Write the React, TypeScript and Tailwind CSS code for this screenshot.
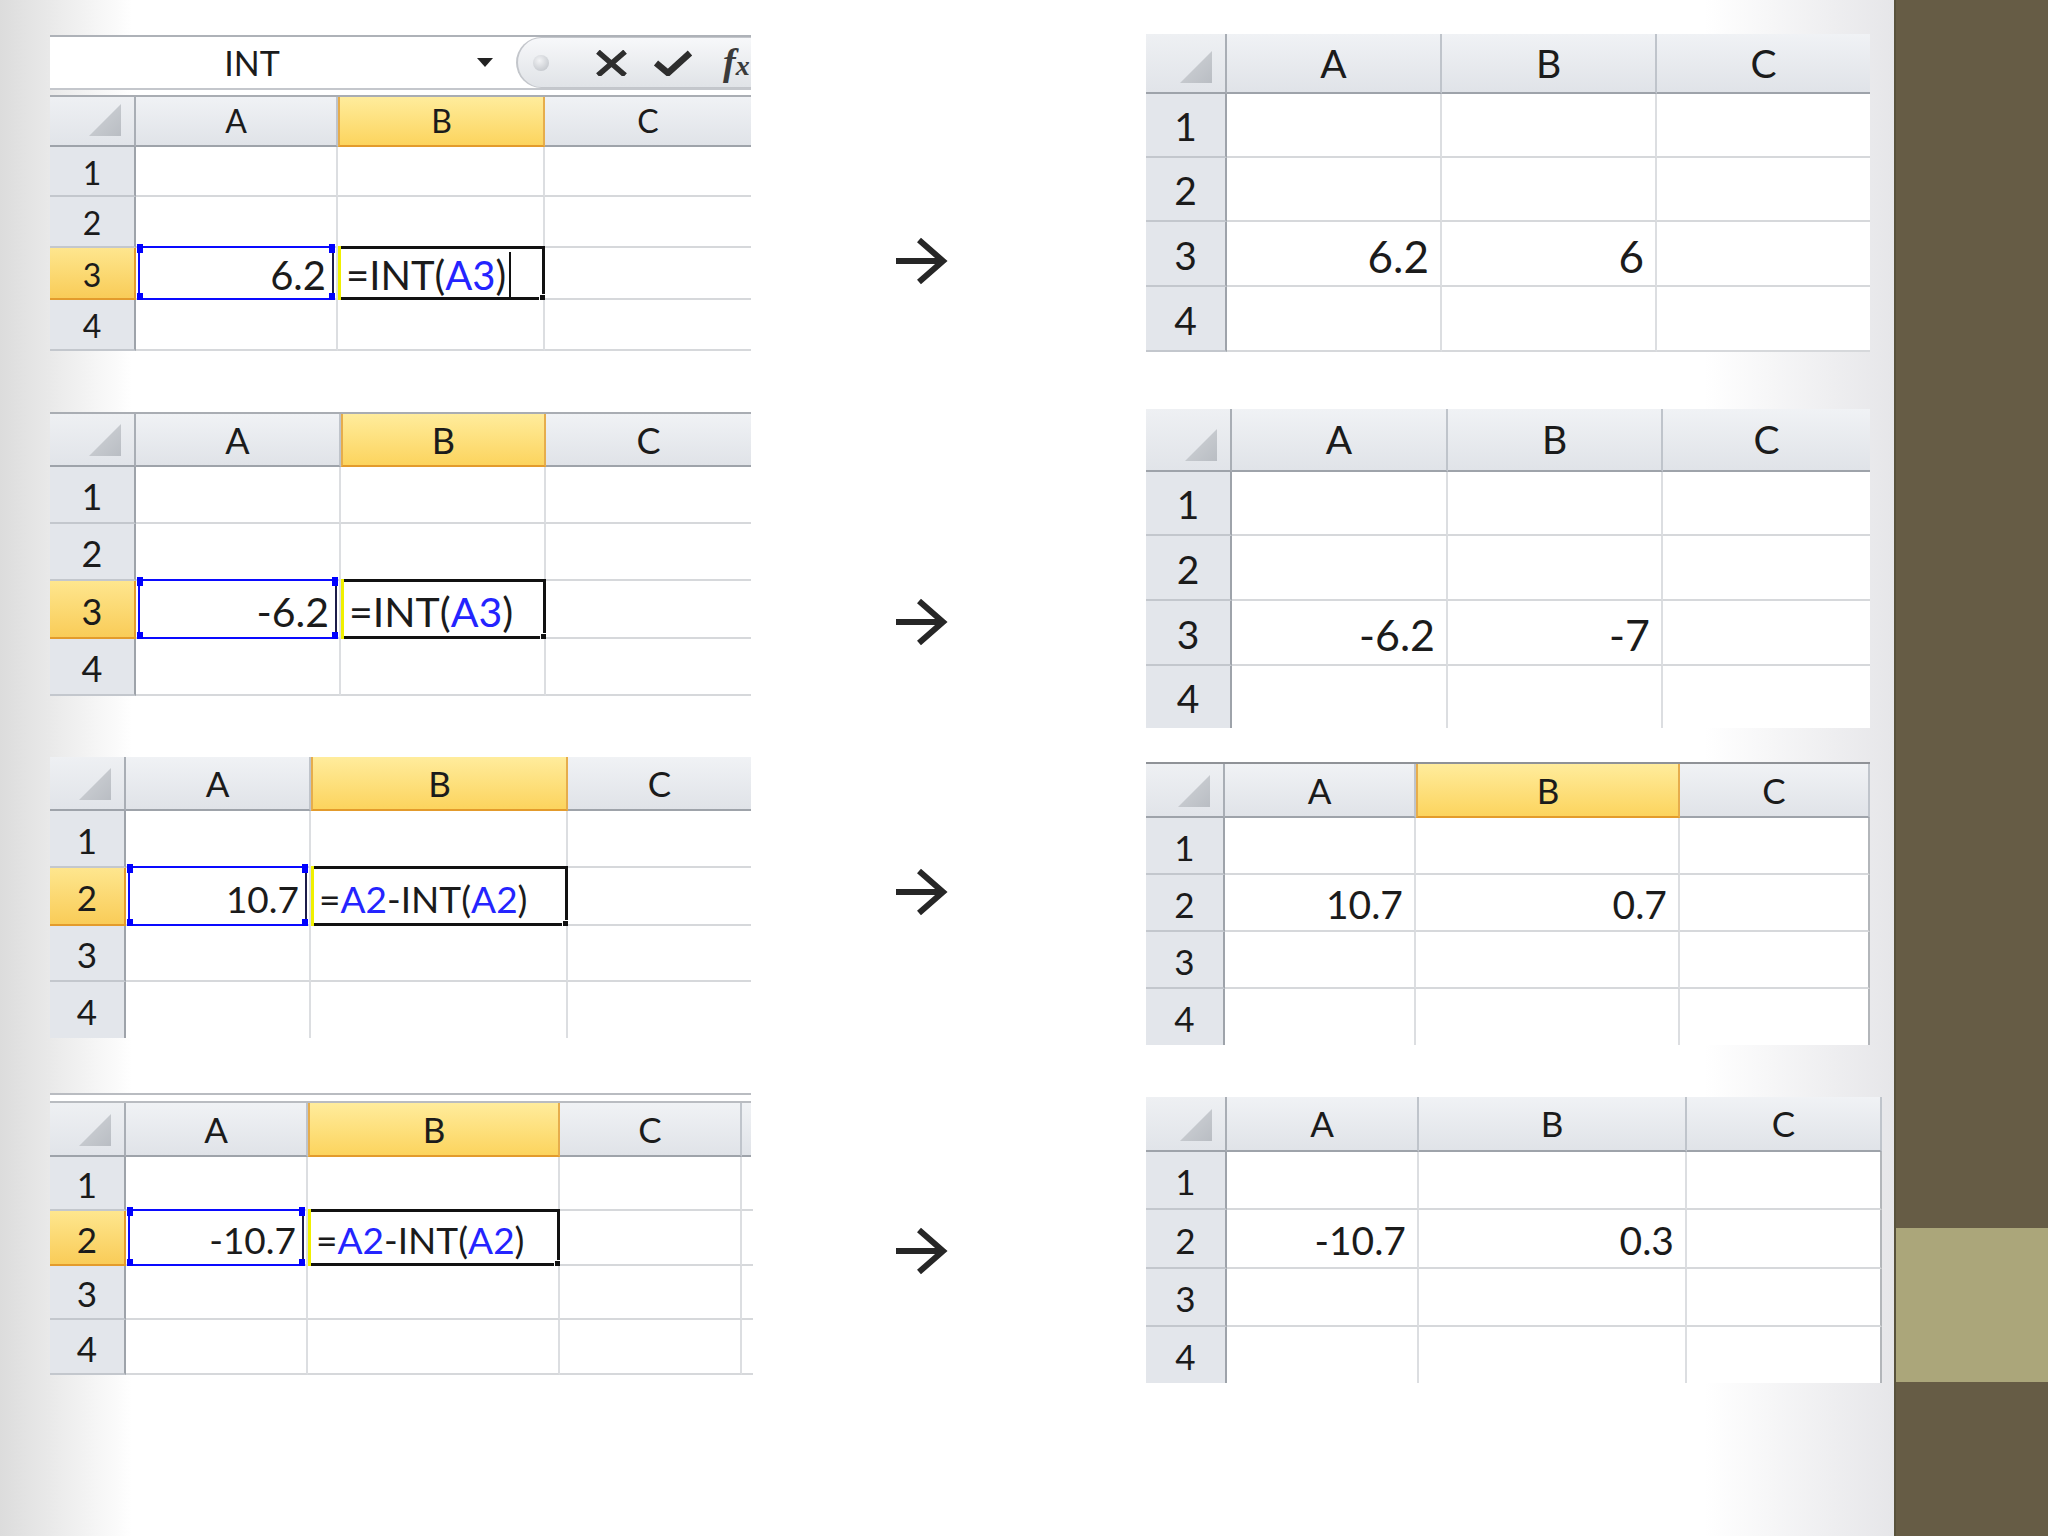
import React from 'react';

const COLS = ['A', 'B', 'C'];

const HEAD = 'flex items-center justify-center bg-[linear-gradient(#f0f2f5,#e0e3e8)] border-b-2 border-b-[#9ea3aa]';
const HEAD_SEP = 'border-r-2 border-r-[#bfc4cb]';
const HEAD_HI = 'flex items-center justify-center bg-[linear-gradient(#ffec9c,#fcd45e)] border-x-2 border-x-[#e6ad4c] border-b-2 border-b-[#e39b2c]';
const ROWHEAD = 'flex items-center justify-center bg-[#e3e6eb] border-r-2 border-r-[#9ea3aa]';
const ROWHEAD_HI = 'flex items-center justify-center bg-[linear-gradient(#fee68e,#f9cc58)] border-r-2 border-r-[#e39b2c]';

interface EditCell {
    row: number;
    value: string;
    formula: React.ReactNode;
    cursor?: boolean;
}

interface SheetProps {
    cols: string;
    rows: string;
    text: string;
    cellText: string;
    hiCol?: number;
    hiRow?: number;
    data?: Record<string, string>;
    edit?: EditCell;
    top?: React.ReactNode;
    closed?: boolean;
    edge?: boolean;
    extra?: boolean;
}

const Ref: React.FC<{ children: React.ReactNode }> = ({ children }) => (
    <span className="text-[#2424ff]">{children}</span>
);

const Corner = () => (
    <div className="flex items-end justify-end pr-[12px] pb-[9px] bg-[linear-gradient(#eef0f3,#e1e4e9)] border-r-2 border-r-[#a9aeb5] border-b-2 border-b-[#9ea3aa]">
        <svg viewBox="0 0 34 34" className="w-[34px] h-[32px]">
            <defs>
                <linearGradient id="tri" x1="0" y1="0" x2="1" y2="1">
                    <stop offset="0" stopColor="#d2d5d9" />
                    <stop offset="1" stopColor="#b9bdc3" />
                </linearGradient>
            </defs>
            <polygon points="34,0 34,34 0,34" fill="url(#tri)" />
        </svg>
    </div>
);

const Sheet: React.FC<SheetProps> = ({ cols, rows, text, cellText, hiCol, hiRow, data = {}, edit, top, closed, edge, extra }) => {
    const cells: React.ReactNode[] = [<Corner key="corner" />];
    const lastIdx = extra ? 3 : 2;

    COLS.forEach((c, i) => {
        const hi = hiCol === i + 1;
        const sep = i < lastIdx || edge ? HEAD_SEP : '';
        cells.push(
            <div key={c} className={hi ? HEAD_HI : `${HEAD} ${sep}`}>
                {c}
            </div>
        );
    });
    if (extra) cells.push(<div key="xh" className={HEAD} />);

    for (let r = 1; r <= 4; r++) {
        const bottom = r < 4 || closed;
        const rowHi = hiRow === r;
        const rhBorder = !bottom ? '' : rowHi ? 'border-b-2 border-b-[#e39b2c]' : 'border-b-2 border-b-[#c3c7cd]';
        cells.push(
            <div key={`r${r}`} className={`${rowHi ? ROWHEAD_HI : ROWHEAD} ${rhBorder} pt-[3px]`}>
                {r}
            </div>
        );

        const all = extra ? [...COLS, 'X'] : COLS;
        all.forEach((c, i) => {
            const isLast = i === all.length - 1;
            const bb = bottom ? 'border-b-2 border-b-[#d6d8db]' : '';
            const br = !isLast ? 'border-r-2 border-r-[#dcdee1]' : edge ? 'border-r-2 border-r-[#b3b6ba]' : '';
            const base = `relative bg-white ${bb} ${br} ${cellText}`;
            const key = `${c}${r}`;

            if (edit && edit.row === r && c === 'A') {
                cells.push(
                    <div key={key} className={`${base} flex items-center justify-end pr-[10px] pt-[4px]`}>
                        {edit.value}
                        <div className="absolute left-[2px] right-[2px] -top-[2px] -bottom-[2px] border-y-2 border-l-2 border-[#0a0aff]" />
                        <div className="absolute right-[2px] -top-[2px] -bottom-[2px] w-[2px] bg-[#1c1c4a]" />
                        <div className="absolute left-[1px] -top-[4px] w-[6px] h-[9px] bg-[#0000ff]" />
                        <div className="absolute left-[1px] -bottom-[4px] w-[6px] h-[9px] bg-[#0000ff]" />
                        <div className="absolute right-[1px] -top-[4px] w-[6px] h-[9px] bg-[#0000ff]" />
                        <div className="absolute right-[1px] -bottom-[4px] w-[6px] h-[9px] bg-[#0000ff]" />
                    </div>
                );
                return;
            }
            if (edit && edit.row === r && c === 'B') {
                cells.push(
                    <div key={key} className={`${base} flex items-center pl-[8px] pt-[4px]`}>
                        <span>{edit.formula}</span>
                        {edit.cursor && <span className="ml-[3px] w-[2px] self-stretch bg-[#111]" />}
                        <div className="absolute -top-[2px] -bottom-[2px] left-0 -right-[2px] border-y-[3px] border-r-[3px] border-[#111]" />
                        <div className="absolute -top-[2px] -bottom-[2px] left-0 w-[3px] bg-[#f0f000]" />
                        <div className="absolute -right-[7px] -bottom-[7px] w-[11px] h-[11px] bg-[#111] border border-white" />
                    </div>
                );
                return;
            }
            cells.push(
                <div key={key} className={`${base} flex items-center justify-end pr-[11px] pt-[4px]`}>
                    {data[key]}
                </div>
            );
        });
    }

    return (
        <div className="flex flex-col">
            {top}
            <div className={`grid ${cols} ${rows} ${text} text-[#1b1b1b] leading-none`}>{cells}</div>
        </div>
    );
};

const FormulaBar = () => (
    <div className="flex h-[55px] border-t-2 border-t-[#aeb2b8] border-b-2 border-b-[#c4c7cc] bg-white">
        <div className="flex items-center w-[466px]">
            <div className="w-[404px] text-center text-[34px] text-[#1b1b1b]">INT</div>
            <svg viewBox="0 0 16 9" className="ml-[23px] w-[16px] h-[9px]">
                <polygon points="0,0 16,0 8,9" fill="#222" />
            </svg>
        </div>
        <div className="flex flex-1 items-center overflow-hidden rounded-l-[28px] border-l-2 border-y border-[#c3c6cb] bg-[linear-gradient(#f7f8fa,#e0e3e7)]">
            <div className="ml-[15px] w-[16px] h-[16px] rounded-full bg-[radial-gradient(circle_at_40%_35%,#f2f3f5,#b9bdc3)]" />
            <svg viewBox="0 0 31 25" className="ml-[47px] w-[31px] h-[26px]">
                <path d="M4 3 L27 23 M27 3 L4 23" stroke="#2e2e2e" strokeWidth="5.5" strokeLinecap="square" />
            </svg>
            <svg viewBox="0 0 40 26" className="ml-[26px] w-[40px] h-[26px]">
                <path d="M3 13 L15 23 L37 3" stroke="#2e2e2e" strokeWidth="6.5" fill="none" strokeLinejoin="miter" />
            </svg>
            <span className="ml-[30px] font-['Liberation_Serif',serif] italic font-bold text-[38px] text-[#3a3a3a] whitespace-nowrap">
                f<span className="text-[28px]">x</span>
            </span>
        </div>
    </div>
);

const Arrow = () => (
    <svg viewBox="0 0 52 48" className="w-[52px] h-[48px]">
        <path d="M0 24 H47" stroke="#262626" strokeWidth="6" />
        <path d="M23 3 L47 24 L23 45" stroke="#262626" strokeWidth="6" fill="none" strokeLinejoin="miter" />
    </svg>
);

const grayLine = <div className="h-[2px] bg-[#a9adb3]" />;

export default function App() {
    return (
        <div className="flex w-[2048px] h-[1536px] overflow-hidden font-['Lato','Open_Sans',sans-serif]">
            <div className="flex flex-col w-[1894px] bg-[linear-gradient(to_right,#dcdcdc,#ffffff_7%,#ffffff_90%,#e6e6e9)]">
                {/* row 1 */}
                <div className="flex items-start h-[400px]">
                    <div className="ml-[50px] mt-[35px] flex flex-col">
                        <FormulaBar />
                        <div className="mt-[5px]">
                            <Sheet
                                top={grayLine}
                                cols="grid-cols-[86px_202px_207px_206px]"
                                rows="grid-rows-[50px_50px_51px_52px_51px]"
                                text="text-[32px]"
                                cellText="text-[40px]"
                                hiCol={2}
                                hiRow={3}
                                closed
                                edit={{ row: 3, value: '6.2', cursor: true, formula: <>=INT(<Ref>A3</Ref>)</> }}
                            />
                        </div>
                    </div>
                    <div className="ml-[145px] mt-[237px]">
                        <Arrow />
                    </div>
                    <div className="ml-[198px] mt-[34px]">
                        <Sheet
                            cols="grid-cols-[81px_215px_215px_213px]"
                            rows="grid-rows-[60px_64px_64px_65px_65px]"
                            text="text-[39px]"
                            cellText="text-[44px]"
                            closed
                            data={{ A3: '6.2', B3: '6' }}
                        />
                    </div>
                </div>

                {/* row 2 */}
                <div className="flex items-start h-[345px]">
                    <div className="ml-[50px] mt-[12px]">
                        <Sheet
                            top={grayLine}
                            cols="grid-cols-[86px_205px_205px_205px]"
                            rows="grid-rows-[53px_57px_57px_58px_57px]"
                            text="text-[36px]"
                            cellText="text-[41px]"
                            hiCol={2}
                            hiRow={3}
                            closed
                            edit={{ row: 3, value: '-6.2', formula: <>=INT(<Ref>A3</Ref>)</> }}
                        />
                    </div>
                    <div className="ml-[145px] mt-[198px]">
                        <Arrow />
                    </div>
                    <div className="ml-[198px] mt-[9px]">
                        <Sheet
                            cols="grid-cols-[86px_216px_215px_207px]"
                            rows="grid-rows-[63px_64px_65px_65px_62px]"
                            text="text-[39px]"
                            cellText="text-[43px]"
                            data={{ A3: '-6.2', B3: '-7' }}
                        />
                    </div>
                </div>

                {/* row 3 */}
                <div className="flex items-start h-[340px]">
                    <div className="ml-[50px] mt-[12px]">
                        <Sheet
                            cols="grid-cols-[76px_185px_257px_183px]"
                            rows="grid-rows-[54px_57px_58px_56px_56px]"
                            text="text-[35px]"
                            cellText="text-[37px]"
                            hiCol={2}
                            hiRow={2}
                            edit={{
                                row: 2,
                                value: '10.7',
                                formula: <>=<Ref>A2</Ref>-INT(<Ref>A2</Ref>)</>,
                            }}
                        />
                    </div>
                    <div className="ml-[145px] mt-[123px]">
                        <Arrow />
                    </div>
                    <div className="ml-[198px] mt-[17px]">
                        <Sheet
                            top={<div className="h-[2px] bg-[#8f9297]" />}
                            cols="grid-cols-[79px_191px_264px_190px]"
                            rows="grid-rows-[54px_57px_57px_57px_56px]"
                            text="text-[35px]"
                            cellText="text-[39px]"
                            hiCol={2}
                            edge
                            data={{ A2: '10.7', B2: '0.7' }}
                        />
                    </div>
                </div>

                {/* row 4 */}
                <div className="flex items-start flex-1">
                    <div className="ml-[50px] mt-[8px]">
                        <Sheet
                            top={<div className="h-[10px] border-y-2 border-[#b9bcc1] bg-white" />}
                            cols="grid-cols-[76px_182px_252px_182px_9px]"
                            rows="grid-rows-[54px_54px_55px_54px_55px]"
                            text="text-[35px]"
                            cellText="text-[37px]"
                            hiCol={2}
                            hiRow={2}
                            closed
                            extra
                            edit={{
                                row: 2,
                                value: '-10.7',
                                formula: <>=<Ref>A2</Ref>-INT(<Ref>A2</Ref>)</>,
                            }}
                        />
                    </div>
                    <div className="ml-[145px] mt-[142px]">
                        <Arrow />
                    </div>
                    <div className="ml-[198px] mt-[12px]">
                        <Sheet
                            cols="grid-cols-[81px_192px_268px_195px]"
                            rows="grid-rows-[55px_58px_59px_58px_56px]"
                            text="text-[35px]"
                            cellText="text-[39px]"
                            edge
                            data={{ A2: '-10.7', B2: '0.3' }}
                        />
                    </div>
                </div>
            </div>

            {/* slide side band */}
            <div className="flex flex-col w-[154px] border-l-2 border-[#58523c]">
                <div className="h-[1228px] bg-[#665c45]" />
                <div className="h-[154px] bg-[#aba67a]" />
                <div className="flex-1 bg-[#665c45]" />
            </div>
        </div>
    );
}
